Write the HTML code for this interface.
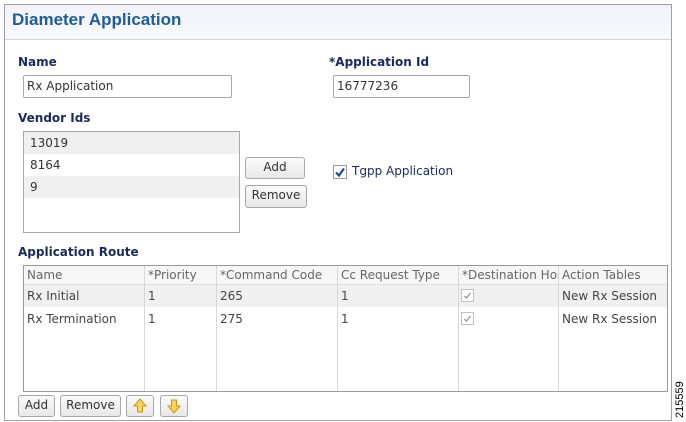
<!DOCTYPE html>
<html><head><style>
*{margin:0;padding:0;box-sizing:border-box}
body{width:686px;height:422px;background:#fff;font-family:"DejaVu Sans","Liberation Sans",sans-serif;position:relative;overflow:hidden;color:#333}
.a{position:absolute}
.panel{left:4px;top:4px;width:668px;height:417px;border:1px solid #a0a0a0}
.hdr{left:5px;top:5px;width:666px;height:35px;background:linear-gradient(#f0f3fa,#f8f9fc);border-bottom:1px solid #d0d4da}
.title{left:12px;top:10px;font-size:17px;font-weight:bold;color:#1f5d94;font-family:"Liberation Sans",sans-serif}
.lbl{font-size:12px;font-weight:bold;color:#1a2a5a}
.inp{border:1px solid #a8a8a8;border-radius:2px;height:23px;font-size:12px;padding:3px 3px;color:#333}
.btn{border:1px solid #a8a8a8;border-radius:3px;background:linear-gradient(#fafafa,#e8e8e8);font-size:12px;text-align:center;color:#333;line-height:19px}
.row{font-size:12px;padding-left:6px;line-height:22px;height:22px}
.sh{background:#f0f0f0}
.tbl{left:23px;top:265px;width:645px;height:127px;border:1px solid #999}
.cell{position:absolute;font-size:12px;line-height:19px;padding-left:3px;white-space:nowrap;overflow:hidden;color:#444}
.vl{position:absolute;top:0;width:1px;height:125px;background:#d8d8d8}
.cb{position:absolute;width:13px;height:13px;border:1px solid #c0c0c0;background:#fff}
.cb svg{position:absolute;left:0;top:0}
</style></head><body>
<div class="a panel"></div>
<div class="a hdr"></div>
<div class="a title">Diameter Application</div>
<div class="a lbl" style="left:18px;top:55px">Name</div>
<div class="a inp" style="left:23px;top:75px;width:209px">Rx Application</div>
<div class="a lbl" style="left:329px;top:55px">*Application Id</div>
<div class="a inp" style="left:333px;top:75px;width:137px">16777236</div>
<div class="a lbl" style="left:18px;top:111px">Vendor Ids</div>
<div class="a" style="left:23px;top:131px;width:217px;height:102px;border:1px solid #a8a8a8">
<div class="row sh">13019</div><div class="row">8164</div><div class="row sh">9</div></div>
<div class="a btn" style="left:245px;top:157px;width:60px;height:22px">Add</div>
<div class="a btn" style="left:245px;top:185px;width:62px;height:23px">Remove</div>
<div class="a" style="left:333px;top:165px;width:14px;height:14px;border:1px solid #999;background:#fff"><svg width="12" height="12" viewBox="0 0 12 12" style="position:absolute;left:0;top:0"><path d="M2 6.5 L5 9.5 L10 2.5" stroke="#1a4f8a" stroke-width="2.2" fill="none"/></svg></div>
<div class="a" style="left:352px;top:164px;font-size:12px;color:#1a2a5a">Tgpp Application</div>
<div class="a lbl" style="left:18px;top:245px">Application Route</div>
<div class="a tbl">
<div style="position:absolute;left:0;top:0;width:643px;height:19px;background:#f6f6f6;border-bottom:1px solid #e0e0e0"></div>
<div style="position:absolute;left:0;top:19px;width:643px;height:22px;background:#f0f0f0"></div>
<div class="vl" style="left:120px"></div><div class="vl" style="left:192px"></div><div class="vl" style="left:313px"></div><div class="vl" style="left:434px"></div><div class="vl" style="left:534px"></div>
<div class="cell" style="left:0;top:0;color:#666">Name</div>
<div class="cell" style="left:121px;top:0;color:#666">*Priority</div>
<div class="cell" style="left:193px;top:0;color:#666">*Command Code</div>
<div class="cell" style="left:314px;top:0;color:#666">Cc Request Type</div>
<div class="cell" style="left:435px;top:0;width:99px;color:#666">*Destination Host</div>
<div class="cell" style="left:535px;top:0;color:#666">Action Tables</div>
<div class="cell" style="left:0;top:21px">Rx Initial</div>
<div class="cell" style="left:121px;top:21px">1</div>
<div class="cell" style="left:193px;top:21px">265</div>
<div class="cell" style="left:314px;top:21px">1</div>
<div class="cb" style="left:437px;top:23px"><svg width="11" height="11"><path d="M2.5 6 L4.5 8 L8.5 3" stroke="#777" fill="none"/></svg></div>
<div class="cell" style="left:535px;top:21px">New Rx Session</div>
<div class="cell" style="left:0;top:44px">Rx Termination</div>
<div class="cell" style="left:121px;top:44px">1</div>
<div class="cell" style="left:193px;top:44px">275</div>
<div class="cell" style="left:314px;top:44px">1</div>
<div class="cb" style="left:437px;top:46px"><svg width="11" height="11"><path d="M2.5 6 L4.5 8 L8.5 3" stroke="#777" fill="none"/></svg></div>
<div class="cell" style="left:535px;top:44px">New Rx Session</div>
</div>
<div class="a btn" style="left:18px;top:395px;width:37px;height:22px">Add</div>
<div class="a btn" style="left:60px;top:395px;width:61px;height:22px">Remove</div>
<div class="a btn" style="left:126px;top:395px;width:28px;height:22px"><svg width="16" height="16" viewBox="0 0 16 16" style="margin-top:2px"><path d="M8 1 L14 8 L10.5 8 L10.5 14 L5.5 14 L5.5 8 L2 8 Z" fill="#f5d55a" stroke="#c9941a"/></svg></div>
<div class="a btn" style="left:160px;top:395px;width:28px;height:22px"><svg width="16" height="16" viewBox="0 0 16 16" style="margin-top:2px"><path d="M8 15 L14 8 L10.5 8 L10.5 2 L5.5 2 L5.5 8 L2 8 Z" fill="#f5d55a" stroke="#c9941a"/></svg></div>
<div class="a" style="left:674px;top:418px;transform:rotate(-90deg);transform-origin:0 0;font-size:11px;font-family:'Liberation Sans',sans-serif;color:#000;white-space:nowrap">215559</div>
</body></html>
